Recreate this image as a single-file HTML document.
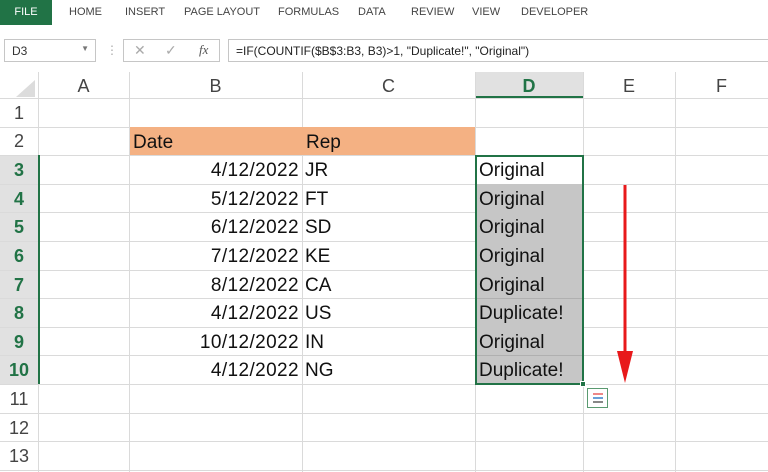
<!DOCTYPE html><html><head><style>
*{margin:0;padding:0;box-sizing:border-box}
body{width:768px;height:472px;overflow:hidden;background:#fff;font-family:"Liberation Sans",sans-serif;position:relative}
.a{position:absolute}
.tab{position:absolute;top:6px;font-size:11px;color:#444}
.hl{position:absolute;left:0;width:768px;height:1px;background:#dadada}
.vl{position:absolute;top:72px;width:1px;height:400px;background:#dadada}
.ch{position:absolute;top:72px;height:26px;font-size:18px;color:#444;text-align:center;line-height:28px}
.rh{position:absolute;left:0;width:38px;font-size:18px;color:#444;text-align:center}
.c{position:absolute;font-size:19px;color:#111;line-height:31px;white-space:nowrap}
.d{letter-spacing:0.4px}
</style></head><body>
<div class="a" style="left:0;top:0;width:52px;height:25px;background:#217346;color:#fff;font-size:11px;text-align:center;line-height:25px">FILE</div>
<div class="tab" style="left:69px">HOME</div>
<div class="tab" style="left:125px">INSERT</div>
<div class="tab" style="left:184px">PAGE LAYOUT</div>
<div class="tab" style="left:278px">FORMULAS</div>
<div class="tab" style="left:358px">DATA</div>
<div class="tab" style="left:411px">REVIEW</div>
<div class="tab" style="left:472px">VIEW</div>
<div class="tab" style="left:521px">DEVELOPER</div>
<div class="a" style="left:4px;top:39px;width:92px;height:23px;border:1px solid #c6c6c6;font-size:12px;color:#333;padding:4px 0 0 7px">D3<span style="position:absolute;right:6px;top:4px;font-size:8px;color:#777">▼</span></div>
<div class="a" style="left:106px;top:43px;font-size:12px;color:#aaa">⋮</div>
<div class="a" style="left:123px;top:39px;width:97px;height:23px;border:1px solid #c6c6c6;font-size:14px;color:#aaa"><span class="a" style="left:10px;top:2px">✕</span><span class="a" style="left:41px;top:2px">✓</span><span class="a" style="left:75px;top:2px;font-family:'Liberation Serif';font-style:italic;color:#555;font-size:13px">fx</span></div>
<div class="a" style="left:228px;top:39px;width:545px;height:23px;border:1px solid #c6c6c6;font-size:12px;color:#222;padding:4px 0 0 7px">=IF(COUNTIF($B$3:B3, B3)&gt;1, "Duplicate!", "Original")</div>
<div class="a" style="left:16px;top:80px;width:0;height:0;border-left:19px solid transparent;border-bottom:17px solid #dcdcdc"></div>
<div class="a" style="left:0;top:155px;width:38px;height:229px;background:#e1e1e1"></div>
<div class="a" style="left:475px;top:72px;width:108px;height:26px;background:#e1e1e1;border-bottom:2px solid #217346"></div>
<div class="hl" style="top:98px"></div><div class="hl" style="top:127px"></div><div class="hl" style="top:155px"></div><div class="hl" style="top:184px"></div><div class="hl" style="top:212px"></div><div class="hl" style="top:241px"></div><div class="hl" style="top:270px"></div><div class="hl" style="top:298px"></div><div class="hl" style="top:327px"></div><div class="hl" style="top:355px"></div><div class="hl" style="top:384px"></div><div class="hl" style="top:413px"></div><div class="hl" style="top:441px"></div><div class="hl" style="top:470px"></div>
<div class="vl" style="left:38px"></div><div class="vl" style="left:129px"></div><div class="vl" style="left:302px"></div><div class="vl" style="left:475px"></div><div class="vl" style="left:583px"></div><div class="vl" style="left:675px"></div>
<div class="a" style="left:38px;top:155px;width:2px;height:229px;background:#217346"></div>
<div class="ch" style="left:38px;width:91px">A</div><div class="ch" style="left:129px;width:173px">B</div><div class="ch" style="left:302px;width:173px">C</div><div class="ch" style="left:475px;width:108px;color:#217346;font-weight:bold">D</div><div class="ch" style="left:583px;width:92px">E</div><div class="ch" style="left:675px;width:93px">F</div>
<div class="a" style="left:130px;top:127px;width:345px;height:28px;background:#f4b183"></div>
<div class="a" style="left:476px;top:184px;width:107px;height:200px;background:#c6c6c6"></div>
<div class="a" style="left:476px;top:298px;width:107px;height:1px;background:#b0b0b0"></div>
<div class="a" style="left:476px;top:355px;width:107px;height:1px;background:#b0b0b0"></div>
<div class="a" style="left:475px;top:155px;width:109px;height:230px;border:2px solid #217346"></div>
<div class="a" style="left:580px;top:381px;width:6px;height:6px;background:#217346;border:1px solid #fff"></div>
<div class="rh" style="top:103px">1</div><div class="rh" style="top:131px">2</div>
<div class="rh" style="top:160px;color:#217346;font-weight:bold">3</div><div class="rh" style="top:189px;color:#217346;font-weight:bold">4</div><div class="rh" style="top:217px;color:#217346;font-weight:bold">5</div><div class="rh" style="top:246px;color:#217346;font-weight:bold">6</div><div class="rh" style="top:275px;color:#217346;font-weight:bold">7</div><div class="rh" style="top:303px;color:#217346;font-weight:bold">8</div><div class="rh" style="top:332px;color:#217346;font-weight:bold">9</div><div class="rh" style="top:360px;color:#217346;font-weight:bold">10</div>
<div class="rh" style="top:389px">11</div><div class="rh" style="top:418px">12</div><div class="rh" style="top:446px">13</div>
<div class="c" style="left:133px;top:127px">Date</div><div class="c" style="left:306px;top:127px">Rep</div>
<div class="c d" style="right:469px;top:155px">4/12/2022</div><div class="c" style="left:305px;top:155px">JR</div><div class="c" style="left:479px;top:155px">Original</div>
<div class="c d" style="right:469px;top:184px">5/12/2022</div><div class="c" style="left:305px;top:184px">FT</div><div class="c" style="left:479px;top:184px">Original</div>
<div class="c d" style="right:469px;top:212px">6/12/2022</div><div class="c" style="left:305px;top:212px">SD</div><div class="c" style="left:479px;top:212px">Original</div>
<div class="c d" style="right:469px;top:241px">7/12/2022</div><div class="c" style="left:305px;top:241px">KE</div><div class="c" style="left:479px;top:241px">Original</div>
<div class="c d" style="right:469px;top:270px">8/12/2022</div><div class="c" style="left:305px;top:270px">CA</div><div class="c" style="left:479px;top:270px">Original</div>
<div class="c d" style="right:469px;top:298px">4/12/2022</div><div class="c" style="left:305px;top:298px">US</div><div class="c" style="left:479px;top:298px">Duplicate!</div>
<div class="c d" style="right:469px;top:327px">10/12/2022</div><div class="c" style="left:305px;top:327px">IN</div><div class="c" style="left:479px;top:327px">Original</div>
<div class="c d" style="right:469px;top:355px">4/12/2022</div><div class="c" style="left:305px;top:355px">NG</div><div class="c" style="left:479px;top:355px">Duplicate!</div>
<svg class="a" style="left:612px;top:183px" width="26" height="202"><line x1="13" y1="2" x2="13" y2="170" stroke="#e8191b" stroke-width="3"/><polygon points="5,168 21,168 13,200" fill="#e8191b"/></svg>
<div class="a" style="left:587px;top:388px;width:21px;height:20px;border:1px solid #5a9a70;background:#fff"><div class="a" style="left:5px;top:4px;width:10px;height:2px;background:#e88"></div><div class="a" style="left:5px;top:8px;width:10px;height:2px;background:#6aa0d8"></div><div class="a" style="left:5px;top:12px;width:10px;height:2px;background:#888"></div></div>
</body></html>
